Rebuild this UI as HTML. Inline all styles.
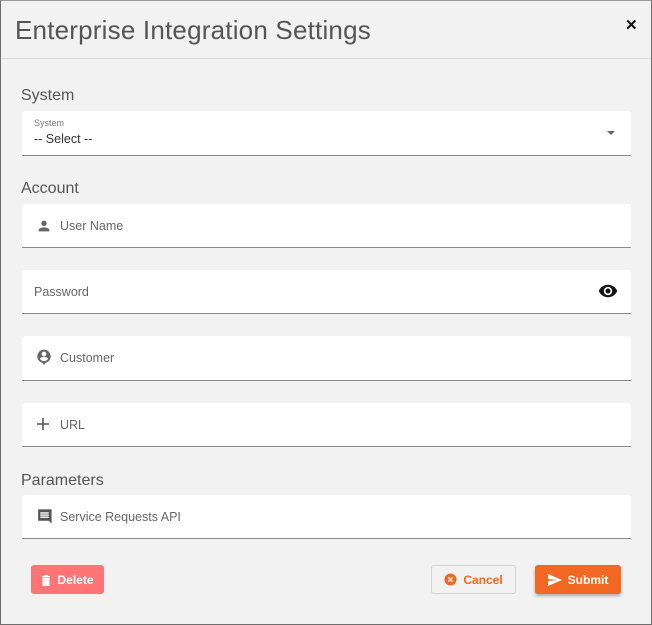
<!DOCTYPE html>
<html><head><style>
*{box-sizing:border-box;margin:0;padding:0}
body{width:652px;height:625px;background:#f2f2f2;font-family:"Liberation Sans",sans-serif;position:relative;overflow:hidden}
.frame{position:absolute;left:0;top:0;width:652px;height:625px;border:1px solid #6e6e6e;border-top-color:#999}
.title{position:absolute;left:15px;top:15px;font-size:26px;color:#555;letter-spacing:0.2px}
.close{position:absolute;left:625px;top:16px;font-size:15px;font-weight:bold;color:#111}
.hr{position:absolute;left:1px;right:1px;top:58px;height:1px;background:#dcdcdc}
.h{position:absolute;left:21px;font-size:16px;color:#555}
.f{position:absolute;left:22px;width:609px;background:#fff;border-bottom:1px solid #8a8a8a;border-radius:3px 3px 0 0}
.lbl{position:absolute;left:38px;font-size:12.5px;color:#666}
.ic{position:absolute;left:14px}
.btn{position:absolute;top:565px;height:29px;border-radius:3px;font-size:12px;font-weight:bold;display:flex;align-items:center;justify-content:center;gap:6px}
</style></head><body>
<div class="frame"></div>
<div class="title">Enterprise Integration Settings</div>
<div class="close">✕</div>
<div class="hr"></div>

<div class="h" style="top:87px">System</div>
<div class="f" style="top:111px;height:45px">
 <div style="position:absolute;left:12px;top:7px;font-size:9px;color:#777">System</div>
 <div style="position:absolute;left:12px;top:21px;font-size:12.5px;color:#333">-- Select --</div>
 <svg style="position:absolute;left:584px;top:19px" width="10" height="6"><path d="M1 1h8l-4 4z" fill="#666"/></svg>
</div>

<div class="h" style="top:180px">Account</div>
<div class="f" style="top:204px;height:44px">
 <svg class="ic" style="top:14px" width="16" height="16" viewBox="0 0 24 24"><path fill="#666" d="M12 12c2.2 0 4-1.8 4-4s-1.8-4-4-4-4 1.8-4 4 1.8 4 4 4zm0 2c-2.7 0-8 1.3-8 4v2h16v-2c0-2.7-5.3-4-8-4z"/></svg>
 <div class="lbl" style="top:15px">User Name</div>
</div>
<div class="f" style="top:270px;height:44px">
 <div class="lbl" style="left:12px;top:15px">Password</div>
 <svg style="position:absolute;left:576px;top:11px" width="20" height="20" viewBox="0 0 24 24"><path fill="#111" d="M12 4.5C7 4.5 2.7 7.6 1 12c1.7 4.4 6 7.5 11 7.5s9.3-3.1 11-7.5c-1.7-4.4-6-7.5-11-7.5zM12 17c-2.8 0-5-2.2-5-5s2.2-5 5-5 5 2.2 5 5-2.2 5-5 5zm0-8c-1.7 0-3 1.3-3 3s1.3 3 3 3 3-1.3 3-3-1.3-3-3-3z"/></svg>
</div>
<div class="f" style="top:336px;height:45px">
 <svg class="ic" style="top:12px" width="16" height="18" viewBox="0 0 24 26"><path fill="#666" d="M12 2C6.5 2 2 6.5 2 12c0 4.6 3.1 8.4 7.3 9.6L12 25l2.7-3.4C18.9 20.4 22 16.6 22 12 22 6.5 17.5 2 12 2zm0 3c1.9 0 3.5 1.6 3.5 3.5S13.9 12 12 12s-3.5-1.6-3.5-3.5S10.1 5 12 5zm0 14.2c-2.5 0-4.7-1.3-6-3.2 0-2 4-3.1 6-3.1s6 1.1 6 3.1c-1.3 1.9-3.5 3.2-6 3.2z"/></svg>
 <div class="lbl" style="top:15px">Customer</div>
</div>
<div class="f" style="top:403px;height:44px">
 <svg class="ic" style="top:14px" width="14" height="14" viewBox="0 0 14 14"><path stroke="#555" stroke-width="1.6" d="M7 1v12M1 7h12"/></svg>
 <div class="lbl" style="top:15px">URL</div>
</div>

<div class="h" style="top:472px">Parameters</div>
<div class="f" style="top:495px;height:44px">
 <svg class="ic" style="top:13px" width="17" height="17" viewBox="0 0 24 24"><path fill="#555" d="M21 2H3v16h15l4 4V2zM18 14H6v-2h12v2zm0-3H6V9h12v2zm0-3H6V6h12v2z"/></svg>
 <div class="lbl" style="top:15px">Service Requests API</div>
</div>

<div class="btn" style="left:31px;width:73px;background:#ff7474;color:#fff">
 <svg width="10" height="12" viewBox="0 0 10 12"><path fill="#fff" d="M1 2h8v1H1zM3 1h4v1H3zM1.5 3.5h7V12h-7z"/></svg>Delete</div>
<div class="btn" style="left:431px;width:85px;background:#f2f2f2;border:1px solid #d4d4d4;color:#f26722">
 <svg width="13" height="13" viewBox="0 0 14 14"><circle cx="7" cy="7" r="6.5" fill="#f26722"/><path d="M4.5 4.5l5 5M9.5 4.5l-5 5" stroke="#fff" stroke-width="1.4"/></svg>Cancel</div>
<div class="btn" style="left:535px;width:86px;background:#f26722;color:#fff;box-shadow:0 2px 3px rgba(0,0,0,.3)">
 <svg width="14" height="12" viewBox="0 0 14 12"><path fill="#fff" d="M0 0l14 6-14 6V7l9-1-9-1z"/></svg>Submit</div>
</body></html>
